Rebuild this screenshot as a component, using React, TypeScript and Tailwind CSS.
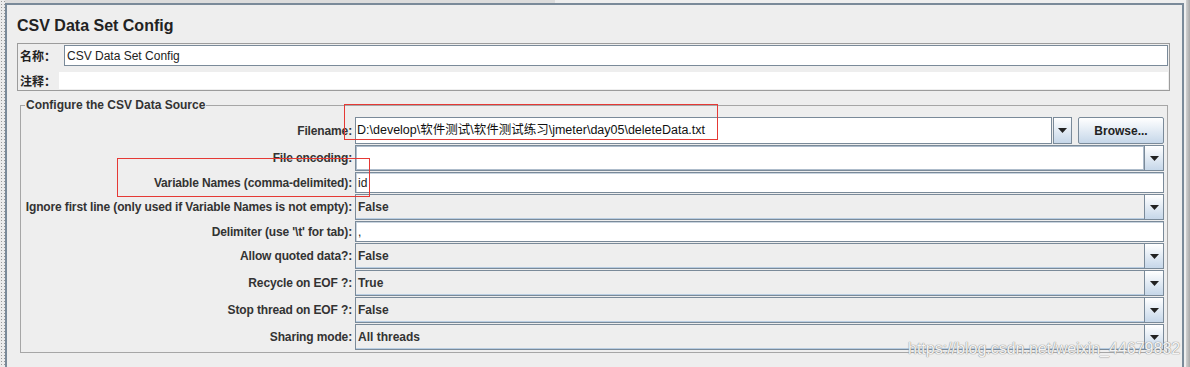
import React from "react";

const FONT = "font-['Liberation_Sans','Noto_Sans_CJK_SC',sans-serif]";

function ArrowBtn({ bordered = false }: { bordered?: boolean }) {
  return (
    <div
      className={
        "w-[19px] shrink-0 self-stretch flex items-center justify-center bg-gradient-to-b from-white to-[#c6d7e9] " +
        (bordered ? "border border-[#7a8a99]" : "border-l border-[#7a8a99]")
      }
    >
      <svg width="9" height="5" viewBox="0 0 9 5">
        <path d="M0 0H9L4.5 5Z" fill="#222" />
      </svg>
    </div>
  );
}

function Label({ children }: { children: React.ReactNode }) {
  return (
    <div className="flex items-center justify-end text-right text-[12px] font-bold text-[#333] whitespace-nowrap tracking-[-0.14px]">
      {children}
    </div>
  );
}

function TextField({ value = "" }: { value?: string }) {
  return (
    <div className="h-[21px] border border-[#7a8a99] bg-white flex items-center px-[2px] text-[12px] text-[#222] shadow-[inset_1px_1px_0_#c9d4df]">
      {value}
    </div>
  );
}

function Combo({ value }: { value: string }) {
  return (
    <div className="h-[26px] border border-[#7a8a99] bg-[#eeeeee] flex shadow-[inset_0_-1px_0_#b8cde2]">
      <div className="flex-1 flex items-center px-[2px] text-[12px] font-bold text-[#333]">{value}</div>
      <ArrowBtn />
    </div>
  );
}

export default function App() {
  return (
    <div className={FONT + " relative w-[1190px] h-[367px] bg-[#eeeeee] overflow-hidden flex"}>
      {/* left dotted splitter */}
      <div className="w-[5px] shrink-0 h-full bg-[#ececec] bg-[radial-gradient(circle,#9a9a9a_0.8px,transparent_0.9px)] bg-[length:3px_3px]" />
      {/* main column */}
      <div className="flex-1 flex flex-col">
        <div className="h-[3px] flex">
          <div className="w-[550px] bg-[#dcdcdc]" />
          <div className="flex-1 bg-[#eeeeee]" />
        </div>
        <div className="flex-1 border-l-2 border-t-2 border-r-2 border-[#7a8a99] pl-[10px] pr-[12px]">
          <div className="mt-[11px] mb-[7px] h-[20px] leading-[20px] text-[16px] font-bold text-[#222]">
            CSV Data Set Config
          </div>
          {/* name / comment box */}
          <div className="border border-[#9c9c9c] p-[1px] pr-[1px]">
            <div className="flex items-center h-[21px]">
              <div className="w-[45px] shrink-0 pl-[1px] text-[12px] font-bold text-[#222] font-['Noto_Sans_CJK_SC','Liberation_Sans',sans-serif]">
                名称：
              </div>
              <div className="flex-1 h-[21px] border border-[#7a8a99] bg-white flex items-center px-[2px] text-[12px] text-[#222]">
                CSV Data Set Config
              </div>
            </div>
            <div className="flex items-center h-[17px] mt-[6px]">
              <div className="w-[40px] shrink-0 pl-[1px] text-[12px] font-bold text-[#222] font-['Noto_Sans_CJK_SC','Liberation_Sans',sans-serif]">
                注释：
              </div>
              <div className="flex-1 h-[17px] bg-white" />
            </div>
          </div>
          {/* fieldset */}
          <fieldset className="mt-[6px] ml-[3px] mr-[2px] border border-[#a6a6a6] pt-[4px] pb-[2px] pr-[3px]">
            <legend className="ml-[4px] px-[1px] text-[12px] leading-[16px] font-bold text-[#333]">
              Configure the CSV Data Source
            </legend>
            <div className="grid grid-cols-[331px_1fr] gap-x-[3px] gap-y-[1px]">
              <Label>Filename:</Label>
              <div className="flex h-[27px] gap-[6px]">
                <div className="flex-1 flex gap-[1px]">
                  <div className="flex-1 border border-[#7a8a99] bg-white flex items-center px-[1px] text-[12.5px] text-[#111] font-['Liberation_Sans','Noto_Sans_CJK_SC',sans-serif]">
                    D:\develop\软件测试\软件测试练习\jmeter\day05\deleteData.txt
                  </div>
                  <ArrowBtn bordered />
                </div>
                <button className="w-[86px] h-[27px] rounded-[2px] border border-[#7a8a99] bg-gradient-to-b from-white to-[#c6d7e9] text-[12px] font-bold text-[#222]">
                  Browse...
                </button>
              </div>

              <Label>File encoding:</Label>
              <div className="h-[26px] border border-[#7a8a99] flex">
                <div className="flex-1 bg-white border border-[#aebccb]" />
                <ArrowBtn />
              </div>

              <Label>Variable Names (comma-delimited):</Label>
              <TextField value="id" />

              <Label>Ignore first line (only used if Variable Names is not empty):</Label>
              <Combo value="False" />

              <Label>Delimiter (use '\t' for tab):</Label>
              <TextField value="," />

              <Label>Allow quoted data?:</Label>
              <Combo value="False" />

              <Label>Recycle on EOF ?:</Label>
              <Combo value="True" />

              <Label>Stop thread on EOF ?:</Label>
              <Combo value="False" />

              <Label>Sharing mode:</Label>
              <Combo value="All threads" />
            </div>
          </fieldset>
        </div>
      </div>
      {/* right edge shadow */}
      <div className="w-[6px] shrink-0 h-full flex">
        <div className="w-[2px] bg-[#eeeeee]" />
        <div className="flex-1 bg-gradient-to-r from-[#d0d0d0] to-[#a9a9a9]" />
      </div>

      {/* annotation boxes */}
      <div className="absolute left-[344px] top-[104px] w-[374px] h-[36px] border border-[#e53935]" />
      <div className="absolute left-[117px] top-[158px] w-[253px] h-[39px] border border-[#e53935]" />

      {/* watermark */}
      <div className="absolute left-[908px] top-[340px] text-[16px] leading-[18px] text-[#f4f4f4] [text-shadow:0_0_1px_#8a8a8a,0_0_1px_#8a8a8a] font-['Liberation_Sans',sans-serif]">
        https://blog.csdn.net/weixin_44679832
      </div>
    </div>
  );
}
